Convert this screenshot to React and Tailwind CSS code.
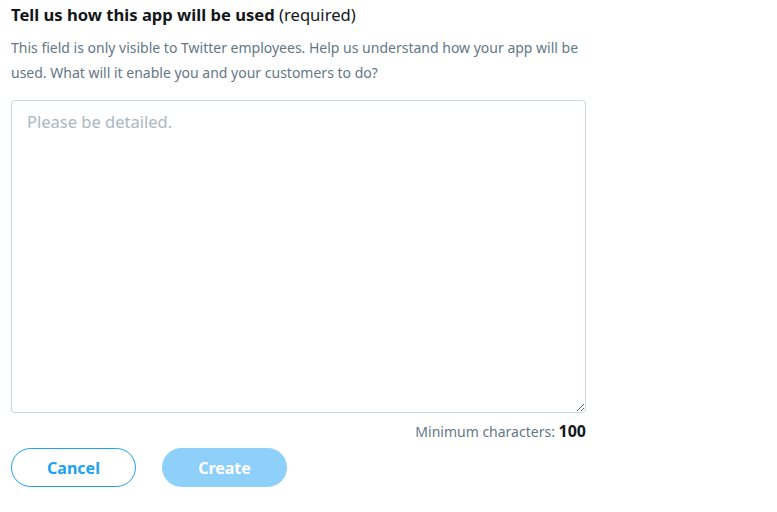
export default function App() {
  return (
    <div className="min-h-screen bg-white pl-[11px] pt-[3px] font-['Noto_Sans',sans-serif]">
      <div className="w-[575px]">
        <h2 className="text-[16.6px] leading-[24px] text-[#14171a]">
          <span className="font-bold">Tell us how this app will be used</span>{" "}
          <span className="font-normal">(required)</span>
        </h2>
        <p className="mt-[8px] text-[14px] leading-[25px] text-[#657786]">
          This field is only visible to Twitter employees. Help us understand how your app will be used. What will it
          enable you and your customers to do?
        </p>
        <textarea
          placeholder="Please be detailed."
          className="mt-[15px] block h-[313px] w-full rounded-[4px] border border-[#ccd6dd] px-[15px] py-[8px] text-[16.5px] leading-[26px] text-[#14171a] placeholder:text-[#aab8c2] focus:outline-none"
        />
        <div className="mt-[6px] text-right text-[14px] leading-[24px] text-[#657786]">
          Minimum characters: <span className="text-[16px] font-bold text-[#14171a]">100</span>
        </div>
        <div className="mt-[4px] flex gap-[26px]">
          <button className="h-[39px] w-[125px] rounded-full border border-[#1da1f2] text-[16px] font-bold text-[#1da1f2]">
            Cancel
          </button>
          <button
            disabled
            className="h-[39px] w-[125px] rounded-full bg-[#8ed0f9] text-[16px] font-bold text-white"
          >
            Create
          </button>
        </div>
      </div>
    </div>
  );
}
